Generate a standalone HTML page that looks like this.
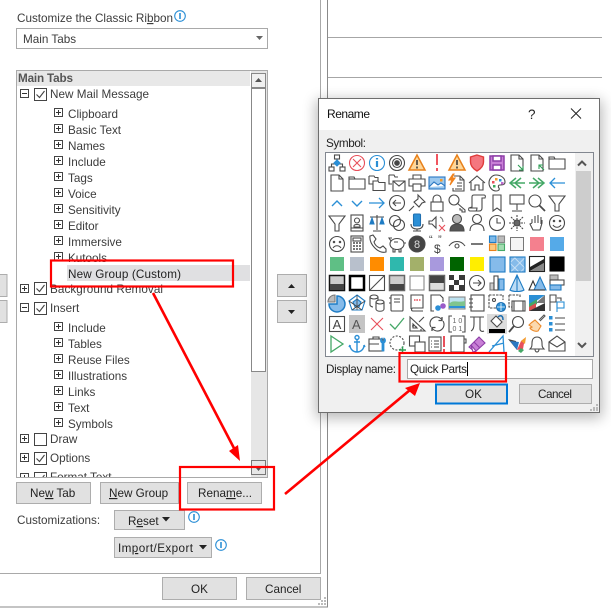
<!DOCTYPE html>
<html><head><meta charset="utf-8"><style>
html,body{margin:0;padding:0;background:#fff;width:611px;height:608px;overflow:hidden}
svg{display:block;font-family:"Liberation Sans",sans-serif;font-size:11.7px}
text{fill:#3c3c3c;stroke:none}
.ic{fill:none;stroke:#4a4a4a;stroke-width:1.1}
.ic text{fill:#444}
</style></head><body>
<svg width="611" height="608" viewBox="0 0 611 608" xmlns="http://www.w3.org/2000/svg">
<defs>
<g id="p"><rect x=".5" y=".5" width="8" height="8" fill="#fff" stroke="#444"/><path d="M2 4.5h5M4.5 2v5" stroke="#333" fill="none"/></g>
<g id="m"><rect x=".5" y=".5" width="8" height="8" fill="#fff" stroke="#444"/><path d="M2 4.5h5" stroke="#333" fill="none"/></g>
<g id="c"><rect x=".5" y=".5" width="12" height="12" fill="#fff" stroke="#444"/><path d="M2.500 6.500l3 3 5-6.500" stroke="#444" fill="none" stroke-width="1.100"/></g>
<g id="u"><rect x=".5" y=".5" width="12" height="12" fill="#fff" stroke="#444"/></g>
<g id="i"><circle cx="6" cy="6" r="5.300" fill="#fff" stroke="#2b8fd6" stroke-width="1.100"/><path d="M6 3v6" stroke="#2b8fd6" stroke-width="1.600"/></g>
<g id="d"><path d="M-6-8h8l4 4v12h-12z"/><path d="M2-8v4h4"/></g>
<g id="f"><path d="M-8-6h5l1 2h10v10h-16z"/><path d="M-8-4h6"/></g>
<filter id="b" x="-20%" y="-20%" width="140%" height="140%"><feGaussianBlur stdDeviation="7"/></filter>
<clipPath id="lc"><rect x="17" y="71" width="234" height="406"/></clipPath>
<pattern id="hat" width="7" height="7" patternUnits="userSpaceOnUse" patternTransform="rotate(45)"><rect width="7" height="7" fill="#85bbea"/><path d="M0 0h7M0 0v7" stroke="#d5e8f8" stroke-width="1.500"/></pattern>
</defs>

<!-- background window -->
<path d="M327.500 0V607H0" stroke="#8a8a8a" fill="none"/>
<path d="M328 37.500H602M328 77.500H602" stroke="#a6a6a6"/>
<path d="M320.500 0V573.500H0" stroke="#a9a9a9" fill="none"/>

<text x="17" y="22" textLength="156">Customize the Classic Ri<tspan text-decoration="underline">b</tspan>bon</text>
<use href="#i" x="174" y="10"/>
<rect x="16.500" y="28.500" width="251" height="20" fill="#fff" stroke="#a9a9a9"/>
<text x="23" y="43">Main Tabs</text>
<path d="M256 36h7l-3.500 4z" fill="#666"/>

<!-- list box -->
<rect x="16.500" y="70.500" width="251" height="407" fill="#fff" stroke="#a9a9a9"/>
<rect x="17" y="71" width="233" height="15" fill="#e8e8e8"/>
<rect x="67" y="265" width="183" height="16" fill="#e0e0e2"/>
<g clip-path="url(#lc)">
<text x="18" y="82" font-weight="bold" textLength="55" style="fill:#555">Main Tabs</text>
<use href="#m" x="20" y="89"/><use href="#c" x="34" y="88"/><text x="50" y="98" textLength="99">New Mail Message</text>
<use href="#p" x="54" y="108"/><text x="68" y="118">Clipboard</text>
<use href="#p" x="54" y="124"/><text x="68" y="134">Basic Text</text>
<use href="#p" x="54" y="140"/><text x="68" y="150">Names</text>
<use href="#p" x="54" y="156"/><text x="68" y="166">Include</text>
<use href="#p" x="54" y="172"/><text x="68" y="182">Tags</text>
<use href="#p" x="54" y="188"/><text x="68" y="198">Voice</text>
<use href="#p" x="54" y="204"/><text x="68" y="214">Sensitivity</text>
<use href="#p" x="54" y="220"/><text x="68" y="230">Editor</text>
<use href="#p" x="54" y="236"/><text x="68" y="246">Immersive</text>
<use href="#p" x="54" y="252"/><text x="68" y="262">Kutools</text>
<text x="68" y="278" textLength="113" style="fill:#222">New Group (Custom)</text>
<use href="#p" x="20" y="284"/><use href="#c" x="34" y="282"/><text x="50" y="293" textLength="113">Background Removal</text>
<use href="#m" x="20" y="303"/><use href="#c" x="34" y="302"/><text x="50" y="312">Insert</text>
<use href="#p" x="54" y="322"/><text x="68" y="332">Include</text>
<use href="#p" x="54" y="338"/><text x="68" y="348">Tables</text>
<use href="#p" x="54" y="354"/><text x="68" y="364">Reuse Files</text>
<use href="#p" x="54" y="370"/><text x="68" y="380">Illustrations</text>
<use href="#p" x="54" y="386"/><text x="68" y="396">Links</text>
<use href="#p" x="54" y="402"/><text x="68" y="412">Text</text>
<use href="#p" x="54" y="418"/><text x="68" y="428">Symbols</text>
<use href="#p" x="20" y="434"/><use href="#u" x="34" y="433"/><text x="50" y="443">Draw</text>
<use href="#p" x="20" y="453"/><use href="#c" x="34" y="452"/><text x="50" y="462">Options</text>
<use href="#p" x="20" y="473"/><use href="#c" x="34" y="472"/><text x="50" y="481">Format Text</text>
</g>
<rect x="251" y="71" width="16" height="406" fill="#e6e6e6"/>
<rect x="251.500" y="88.500" width="14" height="283" fill="#fff" stroke="#888"/>
<rect x="251.500" y="73.500" width="14" height="14" fill="#f0f0f0" stroke="#888"/>
<path d="M255 82l3.500-4 3.500 4z" fill="#555"/>
<rect x="251.500" y="460.500" width="14" height="14" fill="#e6e6e6" stroke="#777"/>
<path d="M256 468h5l-2.500 3z" fill="#555"/>

<!-- side buttons -->
<g fill="#e1e1e1" stroke="#adadad">
<rect x="-3" y="274.500" width="10" height="22"/><rect x="-3" y="300.500" width="10" height="22"/>
<rect x="277.500" y="274.500" width="29" height="22"/><rect x="277.500" y="300.500" width="29" height="22"/>
<rect x="16.500" y="482.500" width="74" height="21"/>
<rect x="100.500" y="482.500" width="78" height="21"/>
<rect x="187.500" y="482.500" width="74" height="21"/>
<rect x="114.500" y="510.500" width="70" height="19"/>
<rect x="114.500" y="537.500" width="97" height="20"/>
<rect x="162.500" y="577.500" width="74" height="22"/>
<rect x="246.500" y="577.500" width="74" height="22"/>
</g>
<path d="M288 288l3.500-4 3.500 4z" fill="#222"/><path d="M288 310h7l-3.500 4z" fill="#222"/>
<text x="30" y="497" style="fill:#222">Ne<tspan text-decoration="underline">w</tspan> Tab</text>
<text x="109" y="497" style="fill:#222"><tspan text-decoration="underline">N</tspan>ew Group</text>
<text x="198" y="497" style="fill:#222">Rena<tspan text-decoration="underline">m</tspan>e...</text>
<text x="17" y="524">Customizations:</text>
<text x="128" y="525" style="fill:#222">R<tspan text-decoration="underline">e</tspan>set</text>
<path d="M162 517h8l-4 4.500z" fill="#222"/>
<use href="#i" x="188" y="511"/>
<text x="118" y="552" textLength="75" style="fill:#222">Im<tspan text-decoration="underline">p</tspan>ort/Export</text>
<path d="M199 545h8l-4 4.500z" fill="#222"/>
<use href="#i" x="215" y="539"/>
<text x="191" y="593" style="fill:#222">OK</text>
<text x="265" y="593" style="fill:#222">Cancel</text>
<g fill="#bbb"><rect x="324" y="597" width="2" height="2"/><rect x="321" y="600" width="2" height="2"/><rect x="324" y="600" width="2" height="2"/><rect x="318" y="603" width="2" height="2"/><rect x="321" y="603" width="2" height="2"/><rect x="324" y="603" width="2" height="2"/></g>

<!-- dialog -->
<rect x="316" y="100" width="286" height="318" fill="#000" opacity=".28" filter="url(#b)"/>
<rect x="318.500" y="98.500" width="281" height="314" fill="#f0f0f0" stroke="#6e6e6e"/>
<rect x="319" y="99" width="280" height="31" fill="#fff"/>
<text x="327" y="118" font-size="12" textLength="43" style="fill:#111">Rename</text>
<text x="528" y="119" font-size="13.500" style="fill:#222">?</text>
<path d="M571 108.500l10 10M581 108.500l-10 10" stroke="#222" fill="none"/>
<text x="326" y="147" textLength="40" style="fill:#222">Symbol:</text>
<rect x="325.500" y="152.500" width="268" height="204" fill="#fff" stroke="#828790"/>
<rect x="575" y="153" width="18" height="203" fill="#f0f0f0"/>
<rect x="576" y="171" width="15" height="110" fill="#cdcdcd"/>
<path d="M578 165.500l4-4 4 4M578 343l4 4 4-4" stroke="#555" stroke-width="2" fill="none"/>

<!-- symbols -->
<g class="ic">
<!-- row 1 -->
<g transform="translate(337 163)"><rect x="-2.500" y="-8" width="5" height="4"/><rect x="-8" y="4" width="5" height="4"/><rect x="3" y="4" width="5" height="4"/><path d="M0-4v5M-5.500 4V1h11v3"/><path d="M0-3l3 3-3 3-3-3z" fill="#2b8fd6" stroke="#2b8fd6"/></g>
<g transform="translate(357 163)" stroke="#e8505b"><circle r="7.500"/><path d="M-4-4l8 8M4-4l-8 8"/></g>
<g transform="translate(377 163)" stroke="#2b8fd6"><circle r="7.500"/><path d="M0-2v6M0-5v1.500" stroke-width="2.200"/></g>
<g transform="translate(397 163)"><circle r="7.500"/><circle r="4.500"/><circle r="2.300" fill="#444"/></g>
<g transform="translate(417 163)"><path d="M0-8l8 15h-16z" fill="#fdd79a" stroke="#e8801a" stroke-width="1.500"/><path d="M0-3v5M0 3.500v2" stroke="#333" stroke-width="1.500"/></g>
<g transform="translate(437 163)"><path d="M0-9v11M0 5v3" stroke="#f0555f" stroke-width="2"/></g>
<g transform="translate(457 163)"><path d="M0-8l8 15h-16z" fill="#fdd79a" stroke="#e8801a" stroke-width="1.500"/><path d="M0-3v5M0 3.500v2" stroke="#333" stroke-width="1.500"/></g>
<g transform="translate(477 163)"><path d="M0-8l6.500 2v5c0 4-3 7-6.500 9-3.500-2-6.500-5-6.500-9v-5z" fill="#f4777f" stroke="#e03b3b" stroke-width="1.400"/></g>
<g transform="translate(497 163)" stroke="#8e3ea8" stroke-width="1.500"><path d="M-7-7h14v14h-14z" fill="#c87fd6"/><rect x="-4" y="-7" width="8" height="5" fill="#fff"/><rect x="-4" y="2" width="8" height="5" fill="#fff"/></g>
<g transform="translate(517 163)"><use href="#d"/><path d="M1 2l5 5M6 3v4h-4" stroke="#2f9e56"/></g>
<g transform="translate(537 163)"><use href="#d"/><path d="M7 7l-5-5M2 6V2h4" stroke="#2f9e56"/></g>
<g transform="translate(557 163)"><use href="#f"/></g>
<!-- row 2 -->
<g transform="translate(337 183)"><use href="#d"/></g>
<g transform="translate(357 183)"><use href="#f"/></g>
<g transform="translate(377 183)"><path d="M-8-7h5l1 1.500h3v3M-8-7v8h4"/><path d="M-4-2h5l1 1.500h6v8h-12z"/></g>
<g transform="translate(397 183)"><path d="M-8-8h5l1 2h3M-8-8v9h3"/><path d="M-4-2h12v10h-12z"/><path d="M-4-2l6 5 6-5"/></g>
<g transform="translate(417 183)"><path d="M-4-4v-4h8v4M-4 3h-4v-7h16v7h-4"/><rect x="-4" y="1" width="8" height="7"/></g>
<g transform="translate(437 183)" stroke="#2b78c2"><rect x="-8" y="-6" width="16" height="12" fill="#9cc9ef"/><path d="M-8 4l5-5 4 3 3-2 4 3" fill="#fff" stroke="#2b78c2"/><rect x="3" y="-4" width="2.500" height="2.500" fill="#f39c2b" stroke="none"/></g>
<g transform="translate(457 183)"><path d="M-3-7h6l4 4v11h-11v-3"/><path d="M3-7v4h4M0 0h5M0 3h5M-2 6h7"/><path d="M-4-9l-4 6h3l-2 5 5-7h-3l2-4z" fill="#f0831e" stroke="#f0831e"/></g>
<g transform="translate(477 183)"><path d="M-8 0l8-7 8 7M-6-1v8h4v-5h4v5h4v-8"/></g>
<g transform="translate(497 183)"><path d="M-1-8c5 0 9 3 9 7 0 3-3 3-5 3-2 0-2 2-1 3 1 2-1 3-3 3-4 0-7-4-7-8s3-8 7-8z"/><rect x="-5" y="-2" width="2.500" height="2.500" fill="#e8505b" stroke="none"/><rect x="-2" y="-5" width="2.500" height="2.500" fill="#f39c2b" stroke="none"/><rect x="2" y="-4" width="2.500" height="2.500" fill="#2b8fd6" stroke="none"/><rect x="4" y="-1" width="2.500" height="2.500" fill="#c06bd0" stroke="none"/><rect x="-4" y="2" width="2.500" height="2.500" fill="#39a85c" stroke="none"/></g>
<g transform="translate(517 183)" stroke="#45a867" stroke-width="1.500"><path d="M8 0h-15M-1-5l-6 5 6 5M4-5l-6 5 6 5"/></g>
<g transform="translate(537 183)" stroke="#45a867" stroke-width="1.500"><path d="M-8 0h15M1-5l6 5-6 5M-4-5l6 5-6 5"/></g>
<g transform="translate(557 183)" stroke="#2b8fd6" stroke-width="1.300"><path d="M8 0h-15M-2-5l-5 5 5 5"/></g>
<!-- row 3 -->
<g transform="translate(337 203)" stroke="#2b8fd6" stroke-width="1.400"><path d="M-5 3l5-5 5 5"/></g>
<g transform="translate(357 203)" stroke="#2b8fd6" stroke-width="1.400"><path d="M-5-2l5 5 5-5"/></g>
<g transform="translate(377 203)" stroke="#2b8fd6" stroke-width="1.300"><path d="M-8 0h15M2-5l5 5-5 5"/></g>
<g transform="translate(397 203)"><circle r="7.500"/><path d="M4 0h-8M-1-3l-3 3 3 3"/></g>
<g transform="translate(417 203)"><path d="M1-8l7 7-3 1-3 4-5-5 4-3zM-3 3l-5 5"/></g>
<g transform="translate(437 203)"><rect x="-6" y="-1" width="12" height="9"/><path d="M-4-1v-3a4 4 0 0 1 8 0v3"/></g>
<g transform="translate(457 203)"><circle cx="-3" cy="-3" r="5"/><path d="M0 0l8 7v2h-3v-2h-2v-2"/></g>
<g transform="translate(477 203)"><path d="M-5 4V-6c0-2 1-2 2-2h10c1 0 2 1 1 3h-3v10c0 2-1 3-3 3h-9c-1 0-2-1-1-3z"/><path d="M-7 5h7c0 1 0 2-1 3"/></g>
<g transform="translate(497 203)"><path d="M-4-8h8v16l-4-3-4 3z"/></g>
<g transform="translate(517 203)"><rect x="-7" y="-8" width="14" height="9"/><path d="M0 1v6M-5 8h10"/></g>
<g transform="translate(537 203)"><circle cx="-2" cy="-2" r="6"/><path d="M2 2l6 6" stroke-width="1.800"/></g>
<g transform="translate(557 203)"><path d="M-8-7h16l-6 8v7h-4v-7z"/></g>
<!-- row 4 -->
<g transform="translate(337 223)"><path d="M-8-7h16l-6 8v7h-4v-7z"/></g>
<g transform="translate(357 223)"><rect x="-6" y="-8" width="12" height="16"/><circle cy="-2.500" r="2.500"/><path d="M-3 3c0-2 6-2 6 0v1h-6zM-6 5h12"/></g>
<g transform="translate(377 223)"><path d="M0-8v15M-4 8h8M-7-6h14"/><path d="M-5-5l-2 6h4zM5-5l-2 6h4z" fill="#1f7cc4" stroke="#1f7cc4"/></g>
<g transform="translate(397 223)"><circle cx="-2" cy="-2" r="5.500"/><circle cx="2" cy="2" r="5.500"/></g>
<g transform="translate(417 223)"><rect x="-3.500" y="-9" width="7" height="12" rx="1" fill="#2b8fd6" stroke="#1f6fb0"/><path d="M-6 1c0 4 3 5 6 5s6-1 6-5M0 6v2M-4 8h8"/></g>
<g transform="translate(437 223)"><path d="M-8-2h3l4-4v11l-4-4h-3z"/><path d="M3-6c2 1 3 3 3 5" stroke="#777"/><path d="M2 2l6 6M8 2l-6 6" stroke="#e8505b"/></g>
<g transform="translate(457 223)"><circle cy="-4" r="4.500" fill="#bbb"/><path d="M-7 8c0-5 3-7 7-7s7 2 7 7z" fill="#555"/></g>
<g transform="translate(477 223)"><circle cy="-4" r="4.500"/><path d="M-7 8c0-5 3-7 7-7s7 2 7 7"/></g>
<g transform="translate(497 223)"><circle r="7.500"/><path d="M0-5v5h4"/></g>
<g transform="translate(517 223)" stroke-dasharray="2 1"><path d="M0-8V8M-8 0H8M-6-6L6 6M6-6L-6 6"/><circle r="3" fill="#666" stroke-dasharray="none"/></g>
<g transform="translate(537 223)"><path d="M-5 0v-4M-2-7V0M1-8V0M4-6V1M-5 0l-2 1 3 6h7l2-7V-3"/></g>
<g transform="translate(557 223)"><circle r="7.500"/><circle cx="-3" cy="-2" r=".7"/><circle cx="3" cy="-2" r=".7"/><path d="M-4 2c2 3 6 3 8 0"/></g>
<!-- row 5 -->
<g transform="translate(337 244)"><circle r="7.500"/><circle cx="-3" cy="-2" r=".7"/><circle cx="3" cy="-2" r=".7"/><path d="M-4 4c2-3 6-3 8 0"/></g>
<g transform="translate(357 244)"><rect x="-6" y="-8" width="12" height="16"/><rect x="-4" y="-6" width="8" height="3"/><path d="M-4-1h2M-1-1h2M2-1h2M-4 2h2M-1 2h2M2 2h2M-4 5h2M-1 5h2M2 5h2" stroke-width="1.500"/></g>
<g transform="translate(377 244)"><path d="M-7-8l3-1 3 4-2 3c1 3 3 5 6 6l3-2 3 3v3c-8 2-17-8-16-16z"/></g>
<g transform="translate(397 244)"><ellipse cy="0" rx="7" ry="5.500"/><path d="M-4 5v3h2v-2M2 6v2h2V5M7-1h2M-6-3l-2-3h3M-3-2h4"/></g>
<g transform="translate(417 244)"><circle r="8" fill="#444"/><text text-anchor="middle" y="4" font-size="11" style="fill:#ddd">8</text></g>
<g transform="translate(437 244)"><text x="-8" y="-1" font-size="11" style="fill:#444">“</text><text x="1" y="-1" font-size="11" style="fill:#444">”</text><text x="-3" y="9" font-size="12" style="fill:#444">$</text></g>
<g transform="translate(457 244)"><path d="M-8 2c4-6 12-6 16 0"/><circle cy="2" r="2"/></g>
<g transform="translate(477 244)"><path d="M-6 0H6" stroke-width="1.500"/></g>
<g transform="translate(497 244)"><rect x="-7.500" y="-8" width="6.500" height="6.500" fill="#7db9e8" stroke="#1f7cc4"/><rect x="1" y="-8" width="6.500" height="6.500" fill="#bbb" stroke="#888"/><rect x="-7.500" y="0" width="6.500" height="6.500" fill="#fbc97f" stroke="#e8801a"/><rect x="1" y="0" width="6.500" height="6.500" fill="#a3dcb1" stroke="#45a867"/></g>
<rect x="510.500" y="237.500" width="13" height="13" fill="#f5f5f5" stroke="#777" stroke-width="1"/>
<rect x="530" y="237" width="14" height="14" fill="#f4808e" stroke="none"/>
<rect x="550" y="237" width="14" height="14" fill="#55aae8" stroke="none"/>
<!-- row 6 -->
<g stroke="none">
<rect x="330" y="257" width="14" height="14" fill="#5fbf85"/>
<rect x="350" y="257" width="14" height="14" fill="#b8c0cc"/>
<rect x="370" y="257" width="14" height="14" fill="#ff8c00"/>
<rect x="390" y="257" width="14" height="14" fill="#2fb8ad"/>
<rect x="410" y="257" width="14" height="14" fill="#a3b06a"/>
<rect x="430" y="257" width="14" height="14" fill="#a899dd"/>
<rect x="450" y="257" width="14" height="14" fill="#006400"/>
<rect x="470" y="257" width="14" height="14" fill="#ffee00"/>
</g>
<rect x="490" y="257" width="15" height="15" fill="#85bbea" stroke="#1f7cc4"/>
<rect x="510" y="257" width="15" height="15" fill="url(#hat)" stroke="#1f7cc4"/>
<g transform="translate(537 264)"><rect x="-7.500" y="-7.500" width="15" height="15" fill="#fff" stroke="#222"/><path d="M-7 7V3L7-5v4z" fill="#222" stroke="none"/><path d="M-7 7l14-8v8z" fill="#888" stroke="none"/></g>
<rect x="550" y="257" width="14" height="14" fill="#000" stroke="#000"/>
<!-- row 7 -->
<g transform="translate(337 283)"><rect x="-7.500" y="-7.500" width="15" height="15" fill="#ccc" stroke="#111" stroke-width="1.500"/><rect x="-7" y="1" width="14" height="6" fill="#444" stroke="none"/></g>
<rect x="350" y="276" width="14" height="14" fill="#fff" stroke="#000" stroke-width="2.500"/>
<g transform="translate(377 283)"><rect x="-7.500" y="-7.500" width="15" height="15" fill="#fff"/><path d="M-7 7L7-7"/></g>
<g transform="translate(397 283)"><rect x="-7.500" y="-7.500" width="15" height="15" fill="#ccc" stroke="#666" stroke-width="1.500"/><rect x="-7" y="1" width="14" height="6" fill="#444" stroke="none"/></g>
<rect x="410" y="276" width="14" height="14" fill="#fff" stroke="#888"/>
<g transform="translate(437 283)"><rect x="-7.500" y="-7.500" width="15" height="15" fill="#ddd" stroke="#666" stroke-width="1.500"/><rect x="-7" y="-7" width="14" height="7" fill="#444" stroke="none"/></g>
<g transform="translate(457 283)" stroke="none"><rect x="-8" y="-8" width="16" height="16" fill="#3a3a3a"/><rect x="-3" y="-8" width="5" height="5" fill="#fff"/><rect x="-8" y="-3" width="5" height="5" fill="#fff"/><rect x="2" y="-3" width="5" height="5" fill="#fff"/><rect x="-3" y="2" width="5" height="5" fill="#fff"/></g>
<g transform="translate(477 283)"><circle r="7.500"/><path d="M-4 0h8M1-3l3 3-3 3"/></g>
<g transform="translate(497 283)"><rect x="-7" y="0" width="4" height="7" fill="#ccc" stroke="#777"/><rect x="-3" y="-7" width="4" height="14" fill="#fff"/><rect x="2" y="-4" width="5" height="11" fill="#85bbea" stroke="#1f7cc4"/></g>
<g transform="translate(517 283)" stroke="#1f7cc4"><path d="M0-8l7 15c-3 2-11 2-14 0z" fill="#bcdcf5"/><path d="M0-8v16"/></g>
<g transform="translate(537 283)"><path d="M-8 7l4-9 4 9z" fill="#fff" stroke="#333"/><path d="M-3 7L3-6l6 13z" fill="#85bbea" stroke="#1f7cc4"/><path d="M-8 7h16" stroke="#333"/></g>
<g transform="translate(557 283)"><rect x="-7" y="-8" width="8" height="5" fill="#bbb" stroke="#777"/><rect x="-7" y="-3" width="14" height="5" fill="#fff"/><rect x="-7" y="2" width="11" height="5" fill="#85bbea" stroke="#1f7cc4"/></g>
<!-- row 8 -->
<g transform="translate(337 303)"><path d="M-8 1a8 8 0 1 0 8-8v8z" fill="#85bbea" stroke="#1f7cc4" stroke-width="1.500"/><path d="M-2-1v-7a7 7 0 0 0-7 7z" fill="#bbb" stroke="#777"/></g>
<g transform="translate(357 303)" stroke="#1f7cc4"><path d="M0-8l8 6-3 9h-10l-3-9z"/><path d="M0-4l4 3-2 5h-4l-2-5z" fill="#85bbea"/><path d="M0-8V7M-8-2L5 7M8-2L-5 7" stroke="#444" stroke-width=".8"/></g>
<g transform="translate(377 303)"><ellipse cx="-3" cy="-6" rx="4" ry="2"/><path d="M-7-6V2c0 1 2 2 3 2M1-6v3"/><ellipse cx="3" cy="-1" rx="4" ry="2" fill="#fff"/><path d="M-1-1v7c0 3 8 3 8 0v-7"/></g>
<g transform="translate(397 303)"><rect x="-6" y="-8" width="12" height="16" rx="1"/><path d="M-3-4h6M-3-1h6M-8-5h2M-8 0h2"/></g>
<g transform="translate(417 303)"><path d="M-6 6V-8h12v13H-4c-2 0-2 3 0 3H6"/><path d="M-3-3h1.500M-.7-3H1M2-3h1.500" stroke="#e8505b" stroke-width="1.500"/></g>
<g transform="translate(437 303)"><path d="M-3 8h-3V-8H3l3 3v4"/><circle cx="1" cy="5" r="2.800" fill="#2b8fd6" stroke="none"/><circle cx="6" cy="3" r="2.800" fill="#9a5bc9" stroke="none"/></g>
<g transform="translate(457 303)"><rect x="-8" y="-6" width="16" height="12" fill="#bde2f0" stroke="#888"/><path d="M-8 1c4-5 8-1 16-3v5h-16z" fill="#7fc48e" stroke="none"/><path d="M-8 3h16v2h-16z" fill="#2b8fd6" stroke="none"/></g>
<g transform="translate(477 303)"><rect x="-6" y="-8" width="13" height="16"/><path d="M-8-4h4M-8 0h4M-8 4h4"/></g>
<g transform="translate(497 303)"><path d="M-8-8h14v5M-8-8v13h7" stroke-dasharray="2.500 1"/><circle cx="-3" cy="-3" r="1.500"/><circle cx="4" cy="4" r="4.500" fill="#2b8fd6" stroke="#1f6fb0"/><path d="M0 4h8M4 0v8" stroke="#fff" stroke-width=".8"/></g>
<g transform="translate(517 303)"><path d="M-8-8H3v3M-8-8V4h3" stroke-dasharray="2.500 1"/><rect x="-5" y="-2" width="13" height="10"/><path d="M-3-2v10M6-2v10"/></g>
<g transform="translate(537 303)" stroke="none"><path d="M-8-8H8L-8 3z" fill="#2b8fd6"/><path d="M-8 1L0-4v5l-8 6z" fill="#45a867"/><path d="M-8 4L-1 0v5L-8 8z" fill="#d94f4f"/><path d="M8-8v8H-1z" fill="#777"/><path d="M8 0V8H-8z" fill="#333"/></g>
<g transform="translate(557 303)"><path d="M-7 8V-8h6v7h-6"/><path d="M0-5h4v3"/><rect x="0" y="-1" width="7" height="6" stroke="#2b8fd6"/><path d="M0-1V9" stroke="#2b8fd6"/></g>
<!-- row 9 -->
<g transform="translate(337 324)"><rect x="-7.500" y="-7.500" width="15" height="15"/><text text-anchor="middle" y="5" font-size="13" style="fill:#444">A</text></g>
<rect x="349" y="315" width="16" height="18" fill="#c4c4c4" stroke="none"/><text x="352" y="329" font-size="13" style="fill:#555">A</text>
<g transform="translate(377 324)" stroke="#e8505b"><path d="M-6-6L6 6M6-6L-6 6"/></g>
<g transform="translate(397 324)" stroke="#45a867" stroke-width="1.300"><path d="M-7 0l5 5 9-11"/></g>
<g transform="translate(417 324)"><path d="M-7 7V-7L8 7z"/><path d="M-4 4V0l4 4zM-5 2h2M-1 4v-2M4 7V5M7-7L2-2"/></g>
<g transform="translate(437 324)"><path d="M-6 3a6.500 6.500 0 0 1 11-7M6-3a6.500 6.500 0 0 1-11 7"/><path d="M5-7v3.500h-3.500M-5 7V3.500h3.500" stroke-width="1.300"/></g>
<g transform="translate(457 324)"><path d="M-5-8h-3V8h3M5-8h3V8H5"/><text x="-4.500" y="-1" font-size="7" style="fill:#666">1 0</text><text x="-4.500" y="7" font-size="7" style="fill:#666">0 1</text></g>
<g transform="translate(477 324)"><path d="M-7-7H7M-3-7V0c0 3-1 6-3 7M3-7V5c0 2 2 3 4 2"/></g>
<rect x="487" y="314" width="20" height="20" fill="#dcdcdc" stroke="none"/>
<g transform="translate(497 324)"><path d="M-6-3L-1-8l6 6-5 5z" fill="#fff"/><path d="M1-7c2-2 5-2 5 3" stroke="#1f6fb0" stroke-width="1.500"/><rect x="-8" y="5" width="16" height="4" fill="#000" stroke="none"/></g>
<g transform="translate(517 324)"><circle cx="1" cy="-2" r="5.500"/><path d="M-3 2l-5 6" stroke-width="1.800"/></g>
<g transform="translate(537 324)" stroke="#ec8a2a"><path d="M-6-1l4-3 6 6-3 5c-3 1-7-1-8-3l2-1-3-2z" fill="#fbd9ae"/><path d="M2-4l5-5 1 1-5 5" stroke="#555"/></g>
<g transform="translate(557 324)"><path d="M-2-6H8M-2 0H8M-2 6H8"/><rect x="-8" y="-8" width="3.500" height="3.500" fill="#2b8fd6" stroke="none"/><rect x="-8" y="-2" width="3.500" height="3.500" fill="#2b8fd6" stroke="none"/><rect x="-8" y="4" width="3.500" height="3.500" fill="#2b8fd6" stroke="none"/></g>
<!-- row 10 -->
<g transform="translate(337 344)" stroke="#45a867" stroke-width="1.300"><path d="M-6-8L6 0-6 8z"/></g>
<g transform="translate(357 344)" stroke="#2b8fd6" stroke-width="1.400"><circle cy="-6.500" r="2"/><path d="M0-4V8M-3-2h6M-7 1c0 4 3 7 7 7s7-3 7-7M-7 1l-1 2M7 1l1 2"/></g>
<g transform="translate(377 344)"><rect x="-8" y="-5" width="14" height="12"/><path d="M-4-5v-2h6v2M-8 0h10"/><path d="M5-6c-2 1-2 4 0 5v8h2v-8c2-1 2-4 0-5v3H5z" fill="#2b8fd6" stroke="#2b8fd6" stroke-width=".8"/></g>
<g transform="translate(397 344)"><circle cy="-1" r="7" stroke-dasharray="2 1.500"/><path d="M2 6h7M5.500 2.500v7" stroke="#2f9e56" stroke-width="1.500"/></g>
<g transform="translate(417 344)"><rect x="-7.500" y="-8" width="10" height="10"/><rect x="-2" y="-2" width="10" height="10" fill="#fff"/></g>
<g transform="translate(437 344)"><rect x="-8" y="-7" width="12" height="14"/><path d="M-6-3h1M-3-3h5M-6 0h1M-3 0h5M-6 3h1M-3 3h5" stroke-width=".9"/><path d="M7-8v11M7 5v3" stroke="#e8505b" stroke-width="2"/></g>
<g transform="translate(457 344)"><rect x="-6" y="-8" width="13" height="16"/><path d="M7-5h2v4H7"/></g>
<g transform="translate(477 344)"><path d="M-8 3L2-7l6 6L-2 8z" fill="#c87fd6" stroke="#8e3ea8"/><path d="M-3-2l6 6" stroke="#8e3ea8"/><path d="M-6 1l5 6-3 1z" fill="#fff" stroke="#8e3ea8"/></g>
<g transform="translate(497 344)" stroke="#2b8fd6" stroke-width="1.300"><path d="M-8 8L6-8 7 8M-5 2L7-1"/></g>
<g transform="translate(517 344)" stroke="none"><path d="M-9-5l8 2 1 9z" fill="#444"/><path d="M-7-3l7 9 2-8z" fill="#2b78c2"/><path d="M0 6l4-9 4-3-2 11z" fill="#e8505b"/><path d="M1 7l3-3 3 2-3 3z" fill="#45a867"/><path d="M4-3l5-4-1 7z" fill="#f39c2b"/></g>
<g transform="translate(537 344)"><path d="M-7 5c2-2 2-3 2-6 0-4 2-6 5-6s5 2 5 6c0 3 0 4 2 6zM-2 5c0 4 4 4 4 0"/></g>
<g transform="translate(557 344)"><path d="M-8-2L0-8l8 6v9h-16z"/><path d="M-8-2l8 5 8-5"/></g>
</g>

<text x="326" y="373" textLength="70" style="fill:#222">Display name:</text>
<rect x="407.500" y="359.500" width="185" height="19" fill="#fff" stroke="#a9a9a9"/>
<text x="410" y="373" textLength="57" style="fill:#222">Quick Parts</text>
<path d="M467.500 362v14" stroke="#000"/>
<rect x="436" y="384.500" width="71" height="19" fill="#e1e1e1" stroke="#0078d7" stroke-width="2"/>
<rect x="519.500" y="384.500" width="72" height="19" fill="#e1e1e1" stroke="#adadad"/>
<text x="465" y="398" style="fill:#222">OK</text>
<text x="538" y="398" textLength="34" style="fill:#222">Cancel</text>
<g fill="#bbb"><rect x="596" y="404" width="2" height="2"/><rect x="593" y="407" width="2" height="2"/><rect x="596" y="407" width="2" height="2"/><rect x="590" y="409" width="2" height="2"/><rect x="593" y="409" width="2" height="2"/><rect x="596" y="409" width="2" height="2"/></g>

<!-- annotations -->
<g fill="none" stroke="#f00" stroke-width="2.200">
<rect x="51" y="260.500" width="182" height="26"/>
<rect x="180" y="467" width="94" height="42.500"/>
<rect x="399.500" y="353" width="106.500" height="28.500"/>
<path d="M153 293L236 452" stroke-width="2.600"/>
<path d="M285 494L410 390" stroke-width="2.600"/>
</g>
<path d="M240 461L229 451 238 445z" fill="#f00"/>
<path d="M420 383L405 388 415 396z" fill="#f00"/>
</svg>
</body></html>
